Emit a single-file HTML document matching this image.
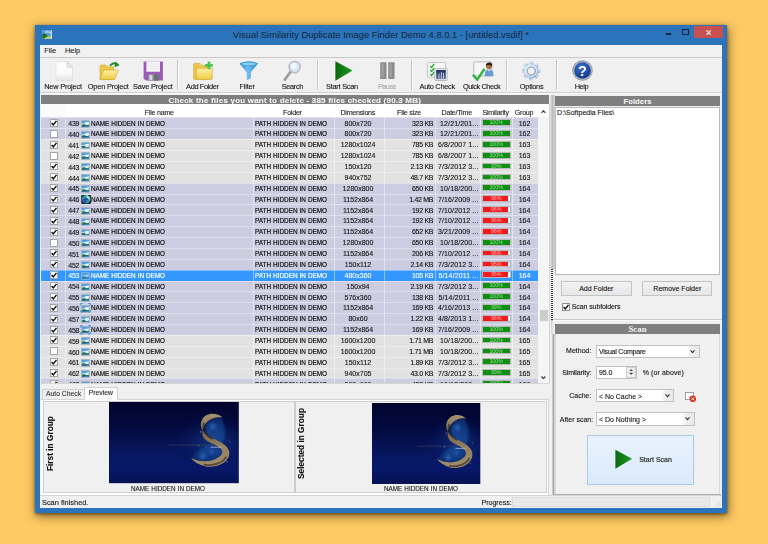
<!DOCTYPE html>
<html>
<head>
<meta charset="utf-8">
<title>Visual Similarity Duplicate Image Finder</title>
<style>
*{box-sizing:border-box;margin:0;padding:0}
html,body{width:768px;height:544px;overflow:hidden}
body{background:#fdca64;font-family:"Liberation Sans",sans-serif;font-size:7px;color:#101010;position:relative;-webkit-text-stroke:.1px}
i{font-style:normal}
.abs{position:absolute}
#win{position:absolute;left:35px;top:25px;width:692px;height:488px;background:#2b73ba;box-shadow:0 1px 3px rgba(45,28,0,.55),1px 3px 10px rgba(60,35,0,.62)}
#title{position:absolute;left:0;top:3.8px;width:692px;text-align:center;font-size:9.4px;color:#12263a;-webkit-text-stroke:0;white-space:nowrap;letter-spacing:0}
#client{position:absolute;left:40px;top:45px;width:682px;height:463px;background:#f0f0f0;overflow:hidden}
/* everything below is positioned in page coordinates inside #page */
#page{position:absolute;left:0;top:0;width:768px;height:544px;filter:blur(.3px)}
.t{position:absolute;white-space:nowrap;line-height:1}
.c{transform:translateX(-50%)}
.menu{font-size:7.4px;top:47px;color:#1a1a1a}
.tl{font-size:7.4px;top:82.7px;color:#101010;letter-spacing:-.2px;transform:translateX(-50%)}
.sep{position:absolute;top:60px;height:30px;width:1px;background:#c4c4c4;box-shadow:1px 0 0 #fdfdfd}
.band{position:absolute;background:#7f7f7f;color:#f4f4f4;font-weight:bold;font-size:8.45px;text-align:center;white-space:nowrap;overflow:hidden}
/* table */
#rows{position:absolute;left:41px;top:0;width:496.5px;height:383px;overflow:hidden}
#tbl{position:absolute;left:41px;top:104px;width:507.5px;height:279px;background:#fff;overflow:hidden}
.hd{position:absolute;top:5px;font-size:7.1px;letter-spacing:-.24px;white-space:nowrap;transform:translateX(-50%);color:#1a1a1a}
.row{position:absolute;left:0;width:496.5px;height:11.6px;overflow:hidden;border-top:1px solid rgba(255,255,255,.38)}
.lav{background:#cdcde1}
.gry{background:#e2e2e2}
.sel{background:#3397fd;color:#fff}
.row span{position:absolute;top:1.15px;white-space:nowrap;line-height:1;font-size:7px}
.row .cb{position:absolute;left:9.3px;top:.6px;width:8px;height:8px;background:#fff;border:1px solid #a6a6a6}
.row .cb svg{position:absolute;left:-1px;top:-1px;width:8px;height:8px}
.row .num{right:458.3px;top:1.8px;text-align:right;letter-spacing:-.25px}
.row .ic{position:absolute;left:40.3px;top:1.4px;width:9.2px;height:7.9px;background:linear-gradient(168deg,#3f97e6 0%,#58a8ea 30%,#cfe6f8 42%,#2a7a58 56%,#1f6a50 70%,#3a8ad0 86%,#3a8ad0 100%);border:.6px solid #a9b4be;border-radius:.8px;overflow:hidden}
.row .ic2{position:absolute;left:39.6px;top:-.6px;width:10.2px;height:10.4px}
.row .ic3{position:absolute;left:39.2px;top:0px;width:11px;height:9.6px}
.row .ic::after{content:"";position:absolute;right:0;top:1.6px;width:4.2px;height:2.4px;background:#f4fafe;border-radius:1.2px;opacity:.9}
.sel .ic{opacity:.62}
.row .nm{left:50px;transform-origin:0 50%;transform:scaleX(.905);word-spacing:.3px;-webkit-text-stroke:.2px}
.row .fd{left:214px;transform-origin:0 50%;transform:scaleX(.91);word-spacing:.3px;-webkit-text-stroke:.2px}
.row .dm{left:317px;transform:translateX(-50%)}
.row .sz{right:104.3px;letter-spacing:-.3px}
.row .dt{right:59px;letter-spacing:.12px}
.row .gp{left:483.5px;transform:translateX(-50%)}
.vl{position:absolute;top:104px;height:279px;width:1px;background:rgba(255,255,255,.42)}
.bar{position:absolute;left:440.7px;top:.75px;width:29.2px;height:6.8px;border:1px solid #b9b9b9;overflow:hidden}
.bar b{position:absolute;left:0;top:0;width:100%;text-align:center;font-size:5.4px;line-height:5px;font-weight:normal;-webkit-text-stroke:0}
.bar.g{background:#0f8f12}
.bar.g b{color:#8fdf8f}
.bar.r{background:linear-gradient(90deg,#f21a1e 0,#f21a1e 92%,#fff 92%)}
.bar.r b{color:#ffb0b0}
/* right panel */
.btn{position:absolute;background:linear-gradient(#f2f2f2,#e7e7e7);border:1px solid #c3c3c3;font-size:7px;text-align:center;white-space:nowrap;color:#111}
.combo{position:absolute;background:#fff;border:1px solid #c2c2c2;font-size:7px;white-space:nowrap;color:#111}
.combo span{position:absolute;left:1.9px;top:2.7px;line-height:1;z-index:1}
.combo .dd{position:absolute;right:0;top:0;bottom:0;width:12px;background:linear-gradient(90deg,#fff,#ececec 45%,#e9e9e9)}
.combo svg{position:absolute;right:3.6px;top:4.3px;width:5px;height:3.4px;z-index:1}
.lbl{position:absolute;font-size:7px;white-space:nowrap;line-height:1;color:#111}
.rot{position:absolute;font-weight:bold;font-size:8.3px;white-space:nowrap;line-height:1;color:#111;transform-origin:0 0;transform:rotate(-90deg)}
</style>
</head>
<body>
<div id="win">
  <div id="title">Visual Similarity Duplicate Image Finder Demo 4.8.0.1 - [untitled.vsdif] *</div>
</div>
<div id="client"></div>
<div id="page">
<!-- title bar -->
<svg class="abs" style="left:41.6px;top:29.6px" width="10" height="9.4" viewBox="0 0 10 9.4"><rect x="0" y="0" width="10" height="9.4" rx=".8" fill="#4a9be0"/><path d="M3 1.2 Q6 .6 8.6 2.2 L8.6 4 Q6 2.4 3 3Z" fill="#bfe0f8" opacity=".8"/><path d="M0 4.4 Q2 2.2 4.6 5 T8.8 5 V8.6 H0Z" fill="#1f6a24"/><path d="M2 8.8 Q5 5.4 8.8 6.2 V9.4 H2Z" fill="#b9cf7a"/><path d="M8.7 .2 H10 V9.4 H8.7Z" fill="#e8eef4"/><rect x="0" y="0" width="10" height="9.4" rx=".8" fill="none" stroke="#9cb4cc" stroke-width=".5"/></svg>
<div class="abs" style="left:666.4px;top:33.3px;width:4.8px;height:1.6px;background:#10233a"></div>
<div class="abs" style="left:682.2px;top:29.4px;width:6.8px;height:5.6px;border:.8px solid #10233a;border-top-width:1.5px"></div>
<div class="abs" style="left:694px;top:25.8px;width:28.6px;height:12.3px;background:#c85050"></div>
<svg class="abs" style="left:705.6px;top:29.8px" width="5.4" height="5.4" viewBox="0 0 6 6"><path d="M.5 .5 L5.5 5.5 M5.5 .5 L.5 5.5" stroke="#fff" stroke-width="1.15"/></svg>
<!-- menu bar -->
<div class="abs" style="left:40px;top:45px;width:682px;height:12px;background:#f2f2f2"></div>
<div class="t menu" style="left:44.2px">File</div>
<div class="t menu" style="left:65px">Help</div>
<div class="abs" style="left:40px;top:56.7px;width:682px;height:1px;background:#c9c9c9"></div>
<div class="abs" style="left:40px;top:92.3px;width:682px;height:1px;background:#cfcfcf"></div>
<div class="abs" style="left:40px;top:93.3px;width:682px;height:1px;background:#fbfbfb"></div>
<!-- toolbar -->
<!-- New Project -->
<svg class="abs" style="left:55px;top:60.5px" width="18.5" height="20.5" viewBox="0 0 18.5 20.5"><defs><linearGradient id="np" x1="0" y1="0" x2="0" y2="1"><stop offset="0" stop-color="#fff"/><stop offset=".6" stop-color="#fafafa"/><stop offset="1" stop-color="#e4e4e4"/></linearGradient></defs><path d="M1.4 20 H17.6" stroke="#bdbdbd" stroke-width=".9"/><path d="M1 .8 H12.2 L17.5 6.2 V19.6 H1Z" fill="url(#np)" stroke="#dcdcdc" stroke-width=".7"/><path d="M12.2 .8 V6.2 H17.5Z" fill="#f1f1f1" stroke="#c4c4c4" stroke-width=".7"/></svg>
<div class="t tl" style="left:63px">New Project</div>
<!-- Open Project -->
<svg class="abs" style="left:98.5px;top:60.5px" width="21.5" height="20" viewBox="0 0 21.5 20"><defs><linearGradient id="fo" x1="0" y1="0" x2="0" y2="1"><stop offset="0" stop-color="#fdf2a4"/><stop offset="1" stop-color="#efcb45"/></linearGradient></defs><path d="M1 5.5 Q1 4 2.5 4 H7 L8.5 5.8 H14.5 V18.5 H1Z" fill="#ecc84c" stroke="#d0a62a" stroke-width=".6"/><path d="M4.6 9 H19.3 L15.6 18.6 H1.1Z" fill="url(#fo)" stroke="#cfa325" stroke-width=".6"/><path d="M11 4.6 Q14.5 .8 18.3 3.2" fill="none" stroke="#1e8a2a" stroke-width="1.9"/><path d="M16.2 .6 L20.6 4.2 L15.6 6.2Z" fill="#1e8a2a"/></svg>
<div class="t tl" style="left:108.2px">Open Project</div>
<!-- Save Project -->
<svg class="abs" style="left:143px;top:60.8px" width="20.5" height="20" viewBox="0 0 20.5 20"><path d="M.6 .5 H19.9 V19.5 H2.6 L.6 17.5Z" fill="#9a5cb8"/><rect x="3.4" y=".5" width="13.6" height="10.2" fill="#fafafa"/><path d="M3.4 3 H17 M3.4 5.4 H17 M3.4 7.8 H17" stroke="#d9d4e0" stroke-width=".7"/><rect x="5" y="13.2" width="10.8" height="6.3" fill="#8d8d93"/><rect x="6.4" y="14" width="3" height="5" fill="#d8d8dc"/><rect x="11" y="13.2" width="4.8" height="6.3" fill="#6f6f78"/></svg>
<div class="t tl" style="left:152.8px">Save Project</div>
<div class="sep" style="left:177.3px"></div>
<!-- Add Folder -->
<svg class="abs" style="left:193.3px;top:61px" width="20.5" height="19.5" viewBox="0 0 20.5 19.5"><defs><linearGradient id="af" x1="0" y1="0" x2="0" y2="1"><stop offset="0" stop-color="#fdf2a4"/><stop offset="1" stop-color="#efcb45"/></linearGradient></defs><path d="M.7 3.8 Q.7 2.4 2 2.4 H7 L8.6 4.4 H15 V18.2 H.7Z" fill="#ecc84c" stroke="#d0a62a" stroke-width=".6"/><path d="M3.2 7.2 H19.2 V17.4 Q19.2 18.4 18.2 18.4 H3.2Z" fill="url(#af)" stroke="#cfa325" stroke-width=".6"/><path d="M16 .5 V8.3 M12.1 4.4 H19.9" stroke="#4cc456" stroke-width="2.7"/></svg>
<div class="t tl" style="left:202.4px;letter-spacing:-0.35px">Add Folder</div>
<!-- Filter -->
<svg class="abs" style="left:238.6px;top:60.6px" width="19.6" height="19.6" viewBox="0 0 19.6 19.6"><defs><linearGradient id="fl" x1="0" y1="0" x2="1" y2="0"><stop offset="0" stop-color="#2c86c8"/><stop offset=".45" stop-color="#6cc0f0"/><stop offset="1" stop-color="#2c86c8"/></linearGradient></defs><path d="M.6 2.6 Q9.8 -1.4 19 2.6 L11.8 11.2 V17.6 L7.8 19 V11.2Z" fill="url(#fl)"/><ellipse cx="9.8" cy="2.7" rx="8.9" ry="2.1" fill="#3f9bd8"/><ellipse cx="9.8" cy="2.9" rx="7" ry="1.2" fill="#8fd2f6"/></svg>
<div class="t tl" style="left:247.1px">Filter</div>
<!-- Search -->
<svg class="abs" style="left:283px;top:60px" width="20" height="21" viewBox="0 0 20 21"><path d="M7.6 11.8 L1.8 19.6" stroke="#9b9b9b" stroke-width="2.6" stroke-linecap="round"/><circle cx="11.7" cy="7.1" r="5.6" fill="#d9e9f7" stroke="#b9bcc0" stroke-width="1.5"/><circle cx="10.6" cy="6" r="3" fill="#f1f8fe"/></svg>
<div class="t tl" style="left:292.4px;letter-spacing:-0.36px">Search</div>
<div class="sep" style="left:316.9px"></div>
<!-- Start Scan -->
<svg class="abs" style="left:335px;top:60.6px" width="18" height="20" viewBox="0 0 18 20"><defs><linearGradient id="pl" x1="0" y1="0" x2="1" y2="0"><stop offset="0" stop-color="#0b6a0f"/><stop offset="1" stop-color="#1f9a22"/></linearGradient></defs><path d="M.4 .3 L17.5 9.6 L.4 19.7Z" fill="url(#pl)"/></svg>
<div class="t tl" style="left:342px;letter-spacing:-0.26px">Start Scan</div>
<!-- Pause -->
<svg class="abs" style="left:380.2px;top:61.8px" width="15" height="17.2" viewBox="0 0 15 17.2"><rect x=".2" y=".2" width="6.3" height="16.8" rx=".6" fill="#8b8b8b"/><rect x="8.2" y=".2" width="6.4" height="16.8" rx=".6" fill="#8b8b8b"/><rect x="1.6" y="1.4" width="2" height="14" fill="#a3a3a3"/><rect x="9.6" y="1.4" width="2" height="14" fill="#a3a3a3"/></svg>
<div class="t tl" style="left:387px;color:#a6a6a6;letter-spacing:-0.55px">Pause</div>
<div class="sep" style="left:410.6px"></div>
<!-- Auto Check -->
<svg class="abs" style="left:427px;top:61.6px" width="21" height="19.4" viewBox="0 0 21 19.4"><rect x=".6" y=".6" width="18" height="14.6" rx=".8" fill="#fbfbfb" stroke="#b9b9b9" stroke-width=".9"/><path d="M3.2 4 L4.6 5.4 L7.2 2 M3.2 8 L4.6 9.4 L7.2 6 M3.2 12 L4.6 13.4 L7.2 10" fill="none" stroke="#2aa836" stroke-width="1.3"/><rect x="7.8" y="6.6" width="12.4" height="12" rx=".8" fill="#f2f2f2" stroke="#aeb2b8" stroke-width=".9"/><defs><linearGradient id="ph" x1="0" y1="0" x2="0" y2="1"><stop offset="0" stop-color="#202c60"/><stop offset="1" stop-color="#5a6a9c"/></linearGradient></defs><rect x="9.2" y="8" width="9.6" height="9.2" fill="url(#ph)"/><path d="M12 17 V11.4 M14.4 17 V9.8 M16.6 17 V10.8" stroke="#c2c8de" stroke-width="1"/></svg>
<div class="t tl" style="left:437.2px;letter-spacing:-0.28px">Auto Check</div>
<!-- Quick Check -->
<svg class="abs" style="left:471.6px;top:61.4px" width="22.4" height="19.8" viewBox="0 0 22.4 19.8"><rect x="1.8" y=".9" width="18" height="14" rx=".8" fill="#f7f7f7" stroke="#b4b4b4" stroke-width=".9"/><path d="M12.6 15.2 Q12.4 8.4 17 8.2 Q21.8 8.4 21.6 15.2Z" fill="#6a9ad2"/><path d="M15.6 8.4 L17 10.6 L18.4 8.4Z" fill="#e8eef6"/><circle cx="17" cy="4.9" r="3.1" fill="#b0703e"/><path d="M13.8 4.4 Q14.8 .6 19 1.8 Q20.8 3.4 20.1 5.6 Q19 3.2 13.8 4.4Z" fill="#2e1c10"/><path d="M.9 13.8 L5.2 18.6 L12.6 7.8" fill="none" stroke="#36b444" stroke-width="2.5"/></svg>
<div class="t tl" style="left:481.6px;letter-spacing:-0.42px">Quick Check</div>
<div class="sep" style="left:506.2px"></div>
<!-- Options -->
<svg class="abs" style="left:522.2px;top:60.6px" width="18.4" height="20" viewBox="-10 -10.3 20 20.6"><defs><linearGradient id="gr" x1="0" y1="0" x2="1" y2="1"><stop offset="0" stop-color="#eef4fa"/><stop offset=".5" stop-color="#b9cde4"/><stop offset="1" stop-color="#7f9cc0"/></linearGradient></defs><g fill="url(#gr)" stroke="#a9bdd6" stroke-width=".5"><g id="tth"><rect x="-2.1" y="-9.9" width="4.2" height="4.4" rx=".9"/></g><use href="#tth" transform="rotate(45)"/><use href="#tth" transform="rotate(90)"/><use href="#tth" transform="rotate(135)"/><use href="#tth" transform="rotate(180)"/><use href="#tth" transform="rotate(225)"/><use href="#tth" transform="rotate(270)"/><use href="#tth" transform="rotate(315)"/></g><circle r="7.5" fill="url(#gr)"/><circle r="5.9" fill="none" stroke="#e9f0f8" stroke-width="1.3" opacity=".85"/><circle r="4.3" fill="#f0f0f0" stroke="#7f99bb" stroke-width=".9"/></svg>
<div class="t tl" style="left:531.6px;letter-spacing:-0.29px">Options</div>
<div class="sep" style="left:556.4px"></div>
<!-- Help -->
<svg class="abs" style="left:572px;top:60px" width="21" height="21" viewBox="-10.5 -10.5 21 21"><defs><radialGradient id="hp" cx=".4" cy=".3" r=".8"><stop offset="0" stop-color="#3a72d2"/><stop offset="1" stop-color="#0f2f86"/></radialGradient></defs><circle r="10.2" fill="#8d9299"/><circle r="9.4" fill="#b4b8be"/><circle r="8.3" fill="url(#hp)"/><text x="0" y="5" text-anchor="middle" font-family="Liberation Sans" font-weight="bold" font-size="14.6" fill="#fff">?</text></svg>
<div class="t tl" style="left:581.4px;letter-spacing:-0.48px">Help</div>

<!-- left band + table -->
<div class="band" style="left:41px;top:94.6px;width:507.5px;height:9.6px;line-height:11.2px;font-size:8px;letter-spacing:.21px">Check the files you want to delete - 385 files checked (90.3 MB)</div>
<div id="tbl">
  <div class="abs" style="left:0;top:0;width:24.5px;height:14px;background:#fbfbfb"></div>
  <div class="hd" style="left:118.3px">File name</div>
  <div class="hd" style="left:251.4px">Folder</div>
  <div class="hd" style="left:316.8px">Dimensions</div>
  <div class="hd" style="left:368px">File size</div>
  <div class="hd" style="left:415.7px">Date/Time</div>
  <div class="hd" style="left:454.7px">Similarity</div>
  <div class="hd" style="left:483px">Group</div>
</div>
<div id="rows">
<div class="row lav" style="top:117.40px">
<i class="cb"><svg viewBox='0 0 8 8'><path d='M1.6 4.1 L3.3 5.9 L6.5 1.9' fill='none' stroke='#111' stroke-width='1.5'/></svg></i>
<span class="num">439</span><i class="ic"></i><span class="nm">NAME HIDDEN IN DEMO</span>
<span class="fd">PATH HIDDEN IN DEMO</span><span class="dm">800x720</span><span class="sz">323 KB</span><span class="dt">12/21/201...</span>
<i class="bar g"><b>100%</b></i><span class="gp">162</span>
</div>
<div class="row lav" style="top:128.28px">
<i class="cb"></i>
<span class="num">440</span><i class="ic"></i><span class="nm">NAME HIDDEN IN DEMO</span>
<span class="fd">PATH HIDDEN IN DEMO</span><span class="dm">800x720</span><span class="sz">323 KB</span><span class="dt">12/21/201...</span>
<i class="bar g"><b>100%</b></i><span class="gp">162</span>
</div>
<div class="row gry" style="top:139.15px">
<i class="cb"><svg viewBox='0 0 8 8'><path d='M1.6 4.1 L3.3 5.9 L6.5 1.9' fill='none' stroke='#111' stroke-width='1.5'/></svg></i>
<span class="num">441</span><i class="ic"></i><span class="nm">NAME HIDDEN IN DEMO</span>
<span class="fd">PATH HIDDEN IN DEMO</span><span class="dm">1280x1024</span><span class="sz">785 KB</span><span class="dt">6/8/2007 1...</span>
<i class="bar g"><b>100%</b></i><span class="gp">163</span>
</div>
<div class="row gry" style="top:150.03px">
<i class="cb"></i>
<span class="num">442</span><i class="ic"></i><span class="nm">NAME HIDDEN IN DEMO</span>
<span class="fd">PATH HIDDEN IN DEMO</span><span class="dm">1280x1024</span><span class="sz">785 KB</span><span class="dt">6/8/2007 1...</span>
<i class="bar g"><b>100%</b></i><span class="gp">163</span>
</div>
<div class="row gry" style="top:160.90px">
<i class="cb"><svg viewBox='0 0 8 8'><path d='M1.6 4.1 L3.3 5.9 L6.5 1.9' fill='none' stroke='#111' stroke-width='1.5'/></svg></i>
<span class="num">443</span><i class="ic"></i><span class="nm">NAME HIDDEN IN DEMO</span>
<span class="fd">PATH HIDDEN IN DEMO</span><span class="dm">150x120</span><span class="sz">2.13 KB</span><span class="dt">7/3/2012 3...</span>
<i class="bar g"><b>99%</b></i><span class="gp">163</span>
</div>
<div class="row gry" style="top:171.78px">
<i class="cb"><svg viewBox='0 0 8 8'><path d='M1.6 4.1 L3.3 5.9 L6.5 1.9' fill='none' stroke='#111' stroke-width='1.5'/></svg></i>
<span class="num">444</span><i class="ic"></i><span class="nm">NAME HIDDEN IN DEMO</span>
<span class="fd">PATH HIDDEN IN DEMO</span><span class="dm">940x752</span><span class="sz">48.7 KB</span><span class="dt">7/3/2012 3...</span>
<i class="bar g"><b>100%</b></i><span class="gp">163</span>
</div>
<div class="row lav" style="top:182.65px">
<i class="cb"><svg viewBox='0 0 8 8'><path d='M1.6 4.1 L3.3 5.9 L6.5 1.9' fill='none' stroke='#111' stroke-width='1.5'/></svg></i>
<span class="num">445</span><i class="ic"></i><span class="nm">NAME HIDDEN IN DEMO</span>
<span class="fd">PATH HIDDEN IN DEMO</span><span class="dm">1280x800</span><span class="sz">650 KB</span><span class="dt">10/18/200...</span>
<i class="bar g"><b>100%</b></i><span class="gp">164</span>
</div>
<div class="row lav" style="top:193.53px">
<i class="cb"><svg viewBox='0 0 8 8'><path d='M1.6 4.1 L3.3 5.9 L6.5 1.9' fill='none' stroke='#111' stroke-width='1.5'/></svg></i>
<span class="num">446</span><svg class="ic2" viewBox="0 0 10 10.4"><rect x=".2" y=".2" width="9.6" height="10" rx="1.6" fill="#1b1b1f"/><circle cx="5" cy="5.2" r="4.3" fill="#2f9a92"/><path d="M5 .9 A4.3 4.3 0 0 1 9.3 5.2 L6.6 5.2 A1.6 1.6 0 0 0 5 3.6Z" fill="#7fd0c4"/><path d="M5 9.5 A4.3 4.3 0 0 1 .7 5.2 L3.4 5.2 A1.6 1.6 0 0 0 5 6.8Z" fill="#2a52b8"/><circle cx="5" cy="5.2" r="1.5" fill="#2238b0"/><path d="M6.2 3.2 L8 4.6" stroke="#fff" stroke-width=".9"/></svg><span class="nm">NAME HIDDEN IN DEMO</span>
<span class="fd">PATH HIDDEN IN DEMO</span><span class="dm">1152x864</span><span class="sz">1.42 MB</span><span class="dt">7/16/2009 ...</span>
<i class="bar r"><b>96%</b></i><span class="gp">164</span>
</div>
<div class="row lav" style="top:204.40px">
<i class="cb"><svg viewBox='0 0 8 8'><path d='M1.6 4.1 L3.3 5.9 L6.5 1.9' fill='none' stroke='#111' stroke-width='1.5'/></svg></i>
<span class="num">447</span><i class="ic"></i><span class="nm">NAME HIDDEN IN DEMO</span>
<span class="fd">PATH HIDDEN IN DEMO</span><span class="dm">1152x864</span><span class="sz">192 KB</span><span class="dt">7/10/2012 ...</span>
<i class="bar r"><b>96%</b></i><span class="gp">164</span>
</div>
<div class="row lav" style="top:215.28px">
<i class="cb"><svg viewBox='0 0 8 8'><path d='M1.6 4.1 L3.3 5.9 L6.5 1.9' fill='none' stroke='#111' stroke-width='1.5'/></svg></i>
<span class="num">448</span><i class="ic"></i><span class="nm">NAME HIDDEN IN DEMO</span>
<span class="fd">PATH HIDDEN IN DEMO</span><span class="dm">1152x864</span><span class="sz">192 KB</span><span class="dt">7/10/2012 ...</span>
<i class="bar r"><b>96%</b></i><span class="gp">164</span>
</div>
<div class="row lav" style="top:226.15px">
<i class="cb"><svg viewBox='0 0 8 8'><path d='M1.6 4.1 L3.3 5.9 L6.5 1.9' fill='none' stroke='#111' stroke-width='1.5'/></svg></i>
<span class="num">449</span><i class="ic"></i><span class="nm">NAME HIDDEN IN DEMO</span>
<span class="fd">PATH HIDDEN IN DEMO</span><span class="dm">1152x864</span><span class="sz">652 KB</span><span class="dt">3/21/2009 ...</span>
<i class="bar r"><b>96%</b></i><span class="gp">164</span>
</div>
<div class="row lav" style="top:237.03px">
<i class="cb"></i>
<span class="num">450</span><i class="ic"></i><span class="nm">NAME HIDDEN IN DEMO</span>
<span class="fd">PATH HIDDEN IN DEMO</span><span class="dm">1280x800</span><span class="sz">650 KB</span><span class="dt">10/18/200...</span>
<i class="bar g"><b>100%</b></i><span class="gp">164</span>
</div>
<div class="row lav" style="top:247.90px">
<i class="cb"><svg viewBox='0 0 8 8'><path d='M1.6 4.1 L3.3 5.9 L6.5 1.9' fill='none' stroke='#111' stroke-width='1.5'/></svg></i>
<span class="num">451</span><i class="ic"></i><span class="nm">NAME HIDDEN IN DEMO</span>
<span class="fd">PATH HIDDEN IN DEMO</span><span class="dm">1152x864</span><span class="sz">206 KB</span><span class="dt">7/10/2012 ...</span>
<i class="bar r"><b>96%</b></i><span class="gp">164</span>
</div>
<div class="row lav" style="top:258.77px">
<i class="cb"><svg viewBox='0 0 8 8'><path d='M1.6 4.1 L3.3 5.9 L6.5 1.9' fill='none' stroke='#111' stroke-width='1.5'/></svg></i>
<span class="num">452</span><i class="ic"></i><span class="nm">NAME HIDDEN IN DEMO</span>
<span class="fd">PATH HIDDEN IN DEMO</span><span class="dm">150x112</span><span class="sz">2.14 KB</span><span class="dt">7/3/2012 3...</span>
<i class="bar r"><b>95%</b></i><span class="gp">164</span>
</div>
<div class="row sel" style="top:269.65px">
<i class="cb"><svg viewBox='0 0 8 8'><path d='M1.6 4.1 L3.3 5.9 L6.5 1.9' fill='none' stroke='#111' stroke-width='1.5'/></svg></i>
<span class="num">453</span><i class="ic"></i><span class="nm">NAME HIDDEN IN DEMO</span>
<span class="fd">PATH HIDDEN IN DEMO</span><span class="dm">480x360</span><span class="sz">105 KB</span><span class="dt">5/14/2011 ...</span>
<i class="bar r"><b>95%</b></i><span class="gp">164</span>
</div>
<div class="row lav" style="top:280.52px">
<i class="cb"><svg viewBox='0 0 8 8'><path d='M1.6 4.1 L3.3 5.9 L6.5 1.9' fill='none' stroke='#111' stroke-width='1.5'/></svg></i>
<span class="num">454</span><i class="ic"></i><span class="nm">NAME HIDDEN IN DEMO</span>
<span class="fd">PATH HIDDEN IN DEMO</span><span class="dm">150x94</span><span class="sz">2.19 KB</span><span class="dt">7/3/2012 3...</span>
<i class="bar g"><b>100%</b></i><span class="gp">164</span>
</div>
<div class="row lav" style="top:291.40px">
<i class="cb"><svg viewBox='0 0 8 8'><path d='M1.6 4.1 L3.3 5.9 L6.5 1.9' fill='none' stroke='#111' stroke-width='1.5'/></svg></i>
<span class="num">455</span><i class="ic"></i><span class="nm">NAME HIDDEN IN DEMO</span>
<span class="fd">PATH HIDDEN IN DEMO</span><span class="dm">576x360</span><span class="sz">138 KB</span><span class="dt">5/14/2011 ...</span>
<i class="bar g"><b>100%</b></i><span class="gp">164</span>
</div>
<div class="row lav" style="top:302.27px">
<i class="cb"><svg viewBox='0 0 8 8'><path d='M1.6 4.1 L3.3 5.9 L6.5 1.9' fill='none' stroke='#111' stroke-width='1.5'/></svg></i>
<span class="num">456</span><i class="ic"></i><svg class="ic3" viewBox="0 0 11 10"><path d="M.5 2.6 V.5 H2.8 M8.2 .5 H10.5 V2.6 M10.5 7.4 V9.5 H8.2 M2.8 9.5 H.5 V7.4" fill="none" stroke="#2f8fe0" stroke-width=".9"/></svg><span class="nm">NAME HIDDEN IN DEMO</span>
<span class="fd">PATH HIDDEN IN DEMO</span><span class="dm">1152x864</span><span class="sz">169 KB</span><span class="dt">4/16/2013 ...</span>
<i class="bar g"><b>99%</b></i><span class="gp">164</span>
</div>
<div class="row lav" style="top:313.15px">
<i class="cb"><svg viewBox='0 0 8 8'><path d='M1.6 4.1 L3.3 5.9 L6.5 1.9' fill='none' stroke='#111' stroke-width='1.5'/></svg></i>
<span class="num">457</span><i class="ic"></i><span class="nm">NAME HIDDEN IN DEMO</span>
<span class="fd">PATH HIDDEN IN DEMO</span><span class="dm">80x60</span><span class="sz">1.22 KB</span><span class="dt">4/8/2013 1...</span>
<i class="bar r"><b>96%</b></i><span class="gp">164</span>
</div>
<div class="row lav" style="top:324.02px">
<i class="cb"><svg viewBox='0 0 8 8'><path d='M1.6 4.1 L3.3 5.9 L6.5 1.9' fill='none' stroke='#111' stroke-width='1.5'/></svg></i>
<span class="num">458</span><i class="ic"></i><svg class="ic3" viewBox="0 0 11 10"><path d="M.5 2.6 V.5 H2.8 M8.2 .5 H10.5 V2.6 M10.5 7.4 V9.5 H8.2 M2.8 9.5 H.5 V7.4" fill="none" stroke="#2f8fe0" stroke-width=".9"/></svg><span class="nm">NAME HIDDEN IN DEMO</span>
<span class="fd">PATH HIDDEN IN DEMO</span><span class="dm">1152x864</span><span class="sz">169 KB</span><span class="dt">7/16/2009 ...</span>
<i class="bar g"><b>100%</b></i><span class="gp">164</span>
</div>
<div class="row gry" style="top:334.90px">
<i class="cb"><svg viewBox='0 0 8 8'><path d='M1.6 4.1 L3.3 5.9 L6.5 1.9' fill='none' stroke='#111' stroke-width='1.5'/></svg></i>
<span class="num">459</span><i class="ic"></i><span class="nm">NAME HIDDEN IN DEMO</span>
<span class="fd">PATH HIDDEN IN DEMO</span><span class="dm">1600x1200</span><span class="sz">1.71 MB</span><span class="dt">10/18/200...</span>
<i class="bar g"><b>100%</b></i><span class="gp">165</span>
</div>
<div class="row gry" style="top:345.77px">
<i class="cb"></i>
<span class="num">460</span><i class="ic"></i><span class="nm">NAME HIDDEN IN DEMO</span>
<span class="fd">PATH HIDDEN IN DEMO</span><span class="dm">1600x1200</span><span class="sz">1.71 MB</span><span class="dt">10/18/200...</span>
<i class="bar g"><b>100%</b></i><span class="gp">165</span>
</div>
<div class="row gry" style="top:356.65px">
<i class="cb"><svg viewBox='0 0 8 8'><path d='M1.6 4.1 L3.3 5.9 L6.5 1.9' fill='none' stroke='#111' stroke-width='1.5'/></svg></i>
<span class="num">461</span><i class="ic"></i><span class="nm">NAME HIDDEN IN DEMO</span>
<span class="fd">PATH HIDDEN IN DEMO</span><span class="dm">150x112</span><span class="sz">1.89 KB</span><span class="dt">7/3/2012 3...</span>
<i class="bar g"><b>100%</b></i><span class="gp">165</span>
</div>
<div class="row gry" style="top:367.52px">
<i class="cb"><svg viewBox='0 0 8 8'><path d='M1.6 4.1 L3.3 5.9 L6.5 1.9' fill='none' stroke='#111' stroke-width='1.5'/></svg></i>
<span class="num">462</span><i class="ic"></i><span class="nm">NAME HIDDEN IN DEMO</span>
<span class="fd">PATH HIDDEN IN DEMO</span><span class="dm">940x705</span><span class="sz">43.0 KB</span><span class="dt">7/3/2012 3...</span>
<i class="bar g"><b>99%</b></i><span class="gp">165</span>
</div>
<div class="row lav" style="top:378.40px">
<i class="cb"><svg viewBox='0 0 8 8'><path d='M1.6 4.1 L3.3 5.9 L6.5 1.9' fill='none' stroke='#111' stroke-width='1.5'/></svg></i>
<span class="num">463</span><i class="ic"></i><span class="nm">NAME HIDDEN IN DEMO</span>
<span class="fd">PATH HIDDEN IN DEMO</span><span class="dm">800x600</span><span class="sz">432 KB</span><span class="dt">10/18/200...</span>
<i class="bar g"><b>100%</b></i><span class="gp">166</span>
</div>
</div>
<div class="vl" style="left:65.3px"></div>
<div class="vl" style="left:253.3px"></div>
<div class="vl" style="left:333.5px"></div>
<div class="vl" style="left:384.3px"></div>
<div class="vl" style="left:435.3px"></div>
<div class="vl" style="left:480px"></div>
<div class="vl" style="left:512px"></div>
<!-- scrollbar -->
<div class="abs" style="left:537.5px;top:104px;width:11.6px;height:279px;background:#f5f5f5"></div>
<div class="abs" style="left:537.5px;top:104px;width:11.6px;height:13.4px;background:#fff"></div>
<svg class="abs" style="left:541.3px;top:110.2px" width="4.8" height="3.4" viewBox="0 0 6 4"><path d="M.6 3.5 L3 .9 L5.4 3.5" fill="none" stroke="#3a3a3a" stroke-width="1.5"/></svg>
<svg class="abs" style="left:541.3px;top:375.7px" width="4.8" height="3.4" viewBox="0 0 6 4"><path d="M.6 .5 L3 3.1 L5.4 .5" fill="none" stroke="#3a3a3a" stroke-width="1.5"/></svg>
<div class="abs" style="left:539.5px;top:310px;width:8.6px;height:10.8px;background:#cdcdcd"></div>
<div class="abs" style="left:41px;top:383px;width:508.4px;height:1px;background:#d6d6d6"></div><div class="abs" style="left:549px;top:104px;width:1px;height:280px;background:#d4d4d4"></div>
<!-- splitter -->
<div class="abs" style="left:550px;top:95px;width:5.4px;height:226px;background:linear-gradient(90deg,#e8e8e8,#bababa 45%,#c2c2c2 60%,#d2d2d2)"></div>
<div class="abs" style="left:550px;top:268.5px;width:5px;height:51.5px;background:#ececec"></div><div class="abs" style="left:551.4px;top:268.5px;width:1.4px;height:51px;background:repeating-linear-gradient(180deg,#3c3c3c 0,#3c3c3c 1px,#f4f4f4 1px,#f4f4f4 2px)"></div>
<div class="abs" style="left:550.8px;top:321px;width:2.2px;height:13px;background:linear-gradient(90deg,#d2d2d2,#e6e6e6)"></div>
<!-- Folders panel -->
<div class="band" style="left:555px;top:95.9px;width:165px;height:9.9px;line-height:11.4px;font-size:7.5px;letter-spacing:.15px">Folders</div>
<div class="abs" style="left:555px;top:107px;width:165px;height:167.5px;background:#fff;border:1px solid #b9b9b9"></div>
<div class="lbl" style="left:557.1px;top:109.2px">D:\Softpedia Files\</div>
<div class="btn" style="left:560.7px;top:281.1px;width:71.2px;height:14.5px;line-height:13.8px">Add Folder</div>
<div class="btn" style="left:642.4px;top:281.1px;width:69.8px;height:14.5px;line-height:13.8px">Remove Folder</div>
<div class="abs" style="left:562.2px;top:302.5px;width:8px;height:8px;background:#fff;border:.8px solid #909090"></div>
<svg class="abs" style="left:562.2px;top:302.5px" width="8" height="8" viewBox="0 0 8 8"><path d="M1.6 4.1 L3.3 5.9 L6.5 1.9" fill="none" stroke="#111" stroke-width="1.5"/></svg>
<div class="lbl" style="left:571.8px;top:303.2px;letter-spacing:-.1px">Scan subfolders</div>
<div class="abs" style="left:553px;top:319.3px;width:169px;height:1px;background:#c9c9c9"></div><div class="abs" style="left:553px;top:320.3px;width:169px;height:1px;background:#fafafa"></div>
<!-- Scan panel -->
<div class="band" style="left:555px;top:323.8px;width:165px;height:10px;line-height:10.6px;font-family:'Liberation Serif',serif;font-size:8.8px;color:#ececec">Scan</div>
<div class="abs" style="left:555px;top:334.4px;width:165px;height:160.6px;border:1px solid #dadada;border-top:none;background:#f0f0f0"></div>
<div class="lbl" style="right:176.6px;top:347.2px">Method:</div>
<div class="combo" style="left:596px;top:344.6px;width:103.6px;height:13.2px"><span style="letter-spacing:-.2px">Visual Compare</span><i class="dd"></i><svg viewBox="0 0 6 4"><path d="M.6 .5 L3 3.1 L5.4 .5" fill="none" stroke="#333" stroke-width="1.35"/></svg></div>
<div class="lbl" style="right:176.6px;top:368.6px;letter-spacing:-.1px">Similarity:</div>
<div class="combo" style="left:596px;top:365.8px;width:40.6px;height:12.8px"><span>95.0</span></div>
<div class="abs" style="left:626.2px;top:366.8px;width:9.4px;height:10.8px;background:#f0f0f0;border:1px solid #cfcfcf"></div><div class="abs" style="left:626.2px;top:371.9px;width:9.4px;height:.7px;background:#cfcfcf"></div>
<svg class="abs" style="left:628.8px;top:368.2px" width="4.4" height="8" viewBox="0 0 5 8"><path d="M.5 3 L2.5 .8 L4.5 3Z M.5 5 L2.5 7.2 L4.5 5Z" fill="#333"/></svg>
<div class="lbl" style="left:642.7px;top:368.6px;letter-spacing:.1px">% (or above)</div>
<div class="lbl" style="right:176.6px;top:392.4px">Cache:</div>
<div class="combo" style="left:596px;top:389.1px;width:78.2px;height:13.4px"><span>&lt; No Cache &gt;</span><i class="dd"></i><svg viewBox="0 0 6 4"><path d="M.6 .5 L3 3.1 L5.4 .5" fill="none" stroke="#333" stroke-width="1.35"/></svg></div>
<svg class="abs" style="left:684.6px;top:391.6px" width="11.4" height="10.4" viewBox="0 0 11.4 10.4"><rect x=".5" y=".5" width="8" height="7" fill="#fdfdfd" stroke="#8f979f" stroke-width=".9"/><circle cx="7.8" cy="6.8" r="3.3" fill="#d8341e"/><path d="M6.4 5.4 L9.2 8.2 M9.2 5.4 L6.4 8.2" stroke="#fff" stroke-width=".9"/></svg>
<div class="lbl" style="right:174.8px;top:416px">After scan:</div>
<div class="combo" style="left:596px;top:412.2px;width:98.6px;height:13.4px"><span>&lt; Do Nothing &gt;</span><i class="dd"></i><svg viewBox="0 0 6 4"><path d="M.6 .5 L3 3.1 L5.4 .5" fill="none" stroke="#333" stroke-width="1.35"/></svg></div>
<div class="abs" style="left:587px;top:434.8px;width:106.8px;height:49.8px;background:linear-gradient(#e8f2fd,#dbeafb);border:1px solid #a9cbee"></div>
<div class="abs" style="left:551.9px;top:334px;width:3.6px;height:161px;background:linear-gradient(90deg,#dcdcdc,#a8a8a8 45%,#b4b4b4 60%,#dedede)"></div>
<div class="abs" style="left:553.2px;top:493.9px;width:168px;height:1.2px;background:#adadad"></div>
<svg class="abs" style="left:615.2px;top:448.8px" width="17.6" height="20.4" viewBox="0 0 18 20"><defs><linearGradient id="pl2" x1="0" y1="0" x2="1" y2="0"><stop offset="0" stop-color="#0b6a0f"/><stop offset="1" stop-color="#1f9a22"/></linearGradient></defs><path d="M.4 .3 L17.5 9.6 L.4 19.7Z" fill="url(#pl2)"/></svg>
<div class="lbl" style="left:639.2px;top:456px">Start Scan</div>

<!-- tabs -->
<div class="abs" style="left:41.6px;top:389px;width:43px;height:11px;background:#eeeeee;border:1px solid #cfcfcf;border-bottom:none"></div>
<div class="lbl" style="left:46px;top:390.8px;font-size:6.8px;color:#333">Auto Check</div>
<div class="abs" style="left:40.2px;top:399.4px;width:508.6px;height:95.4px;background:#fff;border:1px solid #d4d4d4;border-left-color:#f4f4f4;border-bottom:none"></div>
<div class="abs" style="left:84.2px;top:386.8px;width:34px;height:13.6px;background:#fff;border:1px solid #d0d0d0;border-bottom:none"></div>
<div class="lbl" style="left:88.8px;top:390.2px;font-size:6.8px;color:#222">Preview</div>
<!-- preview inner panels -->
<div class="abs" style="left:43.2px;top:401.2px;width:251.8px;height:91.6px;background:#f0f0f0;border:1px solid #cdcdcd"></div>
<div class="abs" style="left:295.2px;top:401.2px;width:251.8px;height:91.6px;background:#f0f0f0;border:1px solid #cdcdcd"></div>
<div class="rot" style="left:46.4px;top:470.8px">First in Group</div>
<div class="rot" style="left:297.2px;top:478.6px">Selected in Group</div>
<svg class="abs" style="left:109.4px;top:402.4px" width="129.8" height="81.2" viewBox="0 0 130 81.5" preserveAspectRatio="none"><defs><linearGradient id="bga" x1="0" y1="0" x2="0" y2="1"><stop offset="0" stop-color="#02042c"/><stop offset=".3" stop-color="#030a3e"/><stop offset=".62" stop-color="#07165e"/><stop offset=".8" stop-color="#07186a"/><stop offset="1" stop-color="#051252"/></linearGradient><radialGradient id="gla" cx="0.8" cy="0.48" r="0.3"><stop offset="0" stop-color="#2a5fb4" stop-opacity=".4"/><stop offset="1" stop-color="#0a2a80" stop-opacity="0"/></radialGradient><filter id="bla" x="-20%" y="-20%" width="140%" height="140%"><feGaussianBlur stdDeviation="1.1"/></filter><radialGradient id="bfa" gradientUnits="userSpaceOnUse" cx="102" cy="40" r="26"><stop offset="0" stop-color="#164a9c"/><stop offset=".6" stop-color="#113a82"/><stop offset="1" stop-color="#0a2868"/></radialGradient><linearGradient id="tfa" x1="0" y1="0" x2="0" y2="1"><stop offset="0" stop-color="#a8946e"/><stop offset=".35" stop-color="#74644c"/><stop offset=".6" stop-color="#93805f"/><stop offset="1" stop-color="#a08c6a"/></linearGradient><filter id="bsa"><feGaussianBlur stdDeviation=".55"/></filter></defs><rect width="130" height="81.5" fill="url(#bga)"/><rect width="130" height="81.5" fill="url(#gla)"/><g transform="translate(120.3 0) scale(1.0 1) translate(-120.3 0)"><g filter="url(#bla)"><path d="M113.2 16 C106 15 100 17 97.5 22 C95 29 98 35 105 38.5 L112.6 42.2 C117 38 117.5 30 115.5 24 C114.5 21 113.6 18.5 113.2 16Z" fill="url(#bfa)"/><path d="M83 56 C90 60 100 61.5 107 58 C113 55 115 50 112 46 L104 43 C96 43.5 88 48.5 83 56Z" fill="url(#bfa)"/><circle cx="104" cy="24.5" r="3" fill="#3a86e0" opacity=".42"/><circle cx="94" cy="54.5" r="3" fill="#3a86e0" opacity=".42"/><circle cx="103" cy="50" r="2.4" fill="#2f7ad8" opacity=".4"/></g><g filter="url(#bsa)"><path d="M113.6 15.4 C108 10.3 96.5 10.3 92.8 18.5 C89.4 27 96.5 33.4 106 37.4 C114.5 41.2 122.2 46 120.3 53.8 C118 63 104 67 95 64.2 C89 62.4 85 59.8 81.9 56.1 C88 59 96 60.4 103 58.6 C110.5 56.6 115.5 52 112.6 47.8 C110 44 103.5 42.2 98 39 C90.5 34.5 93.5 24.5 98.5 19.9 C102.5 16 108 14.6 113.6 15.4Z" fill="url(#tfa)"/><path d="M95.2 21 C93 28 97 33.5 104 37 M117.5 55 C113.5 61.5 104 64.5 95 63" fill="none" stroke="#2c2219" stroke-width="1.9" opacity=".6"/><path d="M60 43.2 H104" stroke="#7a6a5a" stroke-width=".5" opacity=".7"/><path d="M102 45.4 H113" stroke="#d8d8e0" stroke-width=".9" opacity=".7"/><circle cx="92" cy="30" r=".6" fill="#cfe0ff" opacity=".8"/><circle cx="118" cy="60" r=".6" fill="#cfe0ff" opacity=".8"/><circle cx="90" cy="44" r=".5" fill="#cfe0ff" opacity=".7"/><circle cx="121" cy="40" r=".5" fill="#cfe0ff" opacity=".6"/></g></g></svg>
<svg class="abs" style="left:372.3px;top:402.5px" width="108.3" height="81.5" viewBox="0 0 130 81.5" preserveAspectRatio="none"><defs><linearGradient id="bgb" x1="0" y1="0" x2="0" y2="1"><stop offset="0" stop-color="#02042c"/><stop offset=".3" stop-color="#030a3e"/><stop offset=".62" stop-color="#07165e"/><stop offset=".8" stop-color="#07186a"/><stop offset="1" stop-color="#051252"/></linearGradient><radialGradient id="glb" cx="0.8" cy="0.48" r="0.3"><stop offset="0" stop-color="#2a5fb4" stop-opacity=".4"/><stop offset="1" stop-color="#0a2a80" stop-opacity="0"/></radialGradient><filter id="blb" x="-20%" y="-20%" width="140%" height="140%"><feGaussianBlur stdDeviation="1.1"/></filter><radialGradient id="bfb" gradientUnits="userSpaceOnUse" cx="102" cy="40" r="26"><stop offset="0" stop-color="#164a9c"/><stop offset=".6" stop-color="#113a82"/><stop offset="1" stop-color="#0a2868"/></radialGradient><linearGradient id="tfb" x1="0" y1="0" x2="0" y2="1"><stop offset="0" stop-color="#a8946e"/><stop offset=".35" stop-color="#74644c"/><stop offset=".6" stop-color="#93805f"/><stop offset="1" stop-color="#a08c6a"/></linearGradient><filter id="bsb"><feGaussianBlur stdDeviation=".55"/></filter></defs><rect width="130" height="81.5" fill="url(#bgb)"/><rect width="130" height="81.5" fill="url(#glb)"/><g transform="translate(120.3 0) scale(1.1 1) translate(-120.3 0)"><g filter="url(#blb)"><path d="M113.2 16 C106 15 100 17 97.5 22 C95 29 98 35 105 38.5 L112.6 42.2 C117 38 117.5 30 115.5 24 C114.5 21 113.6 18.5 113.2 16Z" fill="url(#bfb)"/><path d="M83 56 C90 60 100 61.5 107 58 C113 55 115 50 112 46 L104 43 C96 43.5 88 48.5 83 56Z" fill="url(#bfb)"/><circle cx="104" cy="24.5" r="3" fill="#3a86e0" opacity=".42"/><circle cx="94" cy="54.5" r="3" fill="#3a86e0" opacity=".42"/><circle cx="103" cy="50" r="2.4" fill="#2f7ad8" opacity=".4"/></g><g filter="url(#bsb)"><path d="M113.6 15.4 C108 10.3 96.5 10.3 92.8 18.5 C89.4 27 96.5 33.4 106 37.4 C114.5 41.2 122.2 46 120.3 53.8 C118 63 104 67 95 64.2 C89 62.4 85 59.8 81.9 56.1 C88 59 96 60.4 103 58.6 C110.5 56.6 115.5 52 112.6 47.8 C110 44 103.5 42.2 98 39 C90.5 34.5 93.5 24.5 98.5 19.9 C102.5 16 108 14.6 113.6 15.4Z" fill="url(#tfb)"/><path d="M95.2 21 C93 28 97 33.5 104 37 M117.5 55 C113.5 61.5 104 64.5 95 63" fill="none" stroke="#2c2219" stroke-width="1.9" opacity=".6"/><path d="M60 43.2 H104" stroke="#7a6a5a" stroke-width=".5" opacity=".7"/><path d="M102 45.4 H113" stroke="#d8d8e0" stroke-width=".9" opacity=".7"/><circle cx="92" cy="30" r=".6" fill="#cfe0ff" opacity=".8"/><circle cx="118" cy="60" r=".6" fill="#cfe0ff" opacity=".8"/><circle cx="90" cy="44" r=".5" fill="#cfe0ff" opacity=".7"/><circle cx="121" cy="40" r=".5" fill="#cfe0ff" opacity=".6"/></g></g></svg>
<div class="lbl" style="left:168.4px;top:484.6px;transform:translateX(-50%) scaleX(.905);word-spacing:.3px">NAME HIDDEN IN DEMO</div>
<div class="lbl" style="left:421px;top:484.6px;transform:translateX(-50%) scaleX(.905);word-spacing:.3px">NAME HIDDEN IN DEMO</div>
<!-- status bar -->
<div class="abs" style="left:40px;top:495px;width:682px;height:1px;background:#d4d4d4"></div>
<div class="lbl" style="left:42px;top:499.4px;font-size:7.4px">Scan finished.</div>
<div class="lbl" style="left:481.4px;top:499.4px;font-size:7.2px;letter-spacing:-.05px">Progress:</div>
<div class="abs" style="left:512.4px;top:497.4px;width:198px;height:10px;background:#e8e8e8;border:1px solid #dcdcdc"></div>
<svg class="abs" style="left:713px;top:499px" width="8" height="8" viewBox="0 0 8 8"><path d="M7.5 2.5 L2.5 7.5 M7.5 5 L5 7.5" stroke="#cfcfcf" stroke-width="1"/></svg>

</div>
</body>
</html>
